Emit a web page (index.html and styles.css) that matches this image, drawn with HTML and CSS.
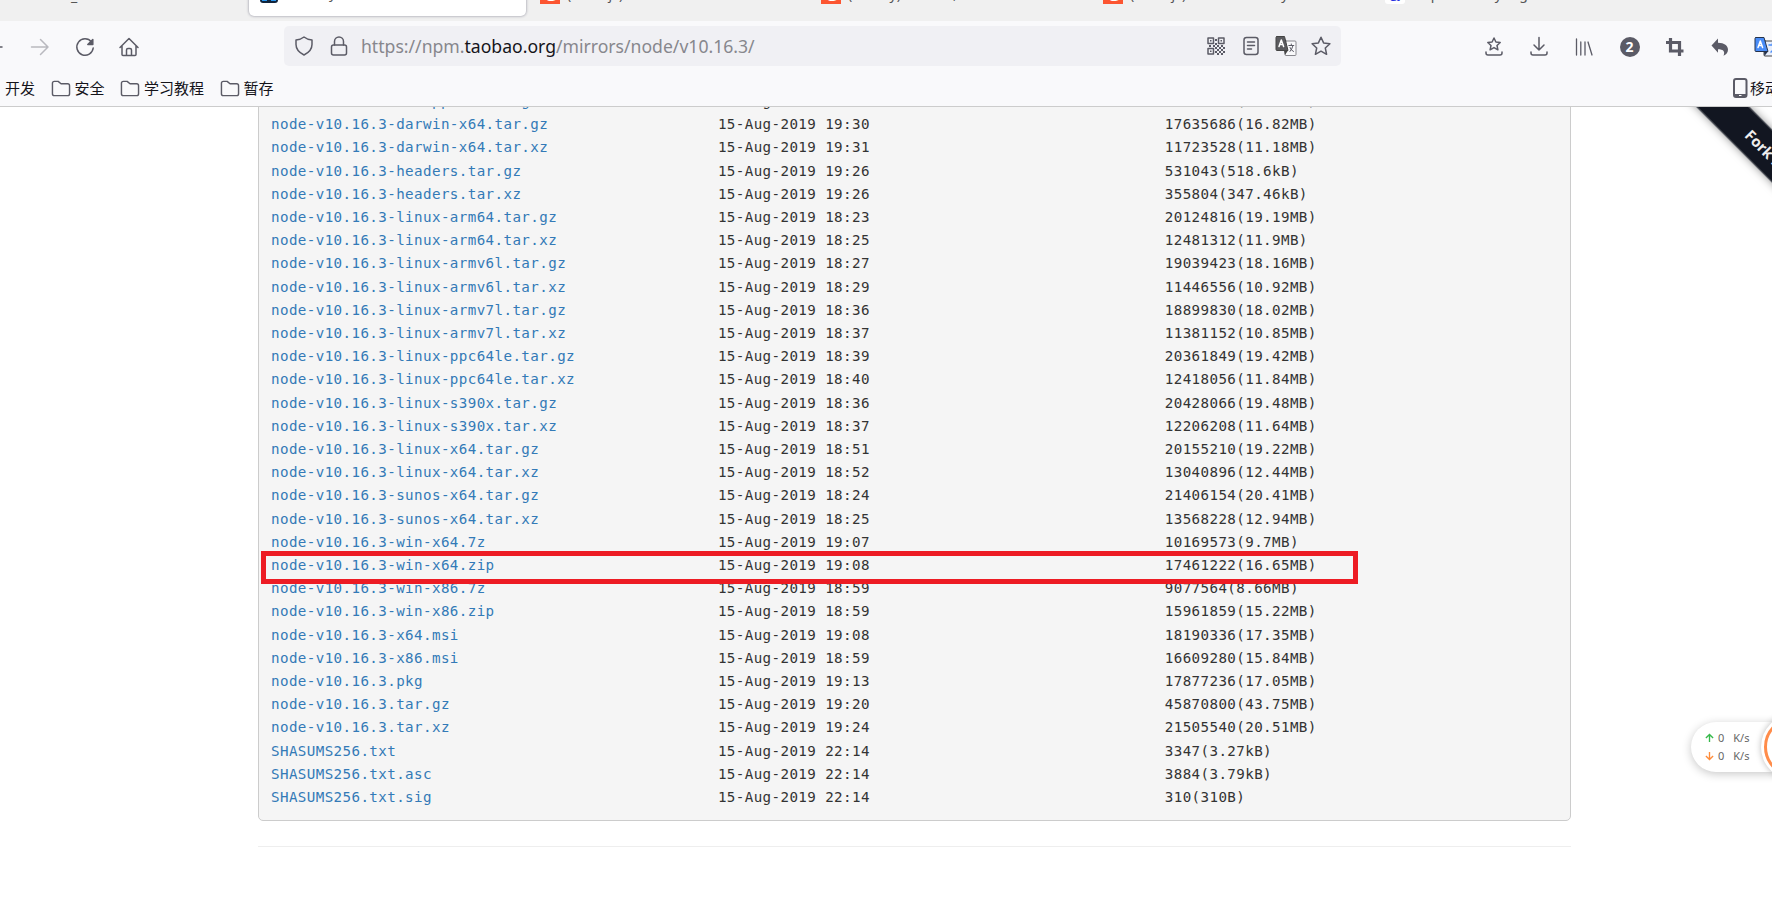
FILE: index.html
```html
<!DOCTYPE html>
<html lang="zh">
<head>
<meta charset="utf-8">
<title>node v10.16.3</title>
<link rel="stylesheet" href="styles.css">
</head>
<body>
<header class="browser">
  <div class="tabs">
    <span class="tab-text underscore">_</span>
    <div class="active-tab"><svg class="npm" viewBox="0 0 18 18"><rect width="18" height="18" rx="3" fill="#10243c"/><path d="M2 11h5v5H2zM11 11h5v5h-5z" fill="#2997f0"/></svg><span class="tab-text">Binary</span></div>
    <div class="tab t1"><i class="csdn">C</i><span class="tab-text">(node.js)</span></div>
    <div class="tab t2"><i class="csdn">C</i><span class="tab-text">(node.y) CSDN x,</span></div>
    <div class="tab t3"><i class="csdn">C</i><span class="tab-text">(node.js) CSDN node my</span></div>
    <div class="tab t4"><i class="baidu">a</i><span class="tab-text">https://binary.org/mirrors/v10.16.3/</span></div>
  </div>
  <nav class="toolbar">
    <svg class="ic back" viewBox="0 0 20 20"><path d="M18 10H2"/></svg>
    <svg class="ic forward" viewBox="0 0 20 20"><path d="M1.500 10h16M10.500 2.500l7.500 7.500-7.500 7.500"/></svg>
    <svg class="ic reload" viewBox="0 0 20 20"><path d="M16.500 5A8.200 8.200 0 1 0 18.200 11"/><path d="M17.800 2.500v5h-5z" class="solid"/></svg>
    <svg class="ic home" viewBox="0 0 20 20"><path d="M1 10.500 10 1.500l9 9M3 9v8.500q0 1 1 1h12q1 0 1-1V9M7.500 18v-5q0-1.500 1.500-1.500h2q1.500 0 1.500 1.500v5"/></svg>
    <div class="address">
      <svg class="ic shield" viewBox="0 0 20 20"><path d="M10 1c2.500 2 5 2.800 8 3v4.500c0 4.500-4 8.500-8 10.500-4-2-8-6-8-10.500V4c3-.2 5.500-1 8-3z"/></svg>
      <svg class="ic lock" viewBox="0 0 20 20"><rect x="2.500" y="9" width="15" height="10" rx="2"/><path d="M5.500 9V5.500a4.500 4.500 0 0 1 9 0V9"/></svg>
      <span class="url">https://npm.<b>taobao.org</b>/mirrors/node/v10.16.3/</span>
      <div class="address-icons">
        <svg class="ic qr" viewBox="0 0 20 20"><path d="M2 2h5.500v5.500H2zM12.500 2H18v5.500h-5.500zM2 12.500h5.500V18H2z"/><path class="dots" d="M4 4h1.500v1.500H4zM14.500 4H16v1.500h-1.500zM4 14.500h1.500V16H4zM9 3h2v2H9zM9 7h2v2H9zM3 9h2v2H3zM7 9h2v2H7zM11 9h2v2h-2zM15 9h2v2h-2zM9 11h2v2H9zM13 11h2v2h-2zM17 11h2v2h-2zM11 13h2v2h-2zM15 13h2v2h-2zM9 15h2v2H9zM13 15h2v2h-2zM17 15h2v2h-2zM11 17h2v2h-2zM15 17h2v2h-2z"/></svg>
        <svg class="ic" viewBox="0 0 20 20"><rect x="3" y="1.500" width="14" height="17" rx="2.500"/><path d="M6.500 6h7M6.500 9.500h7M6.500 13h4"/></svg>
        <svg class="ic translate" viewBox="0 0 20 20"><rect x="9" y="5" width="11" height="14.500" rx="1" fill="#f9f9fb" stroke="#87878d" stroke-width="1"/><path d="M1 .5h7.500l3.500 14H1q-1 0-1-1v-12q0-1 1-1z" fill="#5b5b5f" stroke="#444" stroke-width="1"/><path d="m9 19 3-4.500H8z" fill="#444" stroke="none"/><path d="m3 10.500 2.300-6.500 2.300 6.500M4 8.500h3" stroke="#fff"/><path d="M12.800 9.500h5M15.300 8v1.500M17 9.500q-1 4-3 6M14 11.500q1 3 3.500 4" stroke-width="1"/></svg>
        <svg class="ic" viewBox="0 0 20 20"><path d="m10 1.200 2.600 5.700 6.300.8-4.600 4.300 1.300 6.300-5.600-3.100-5.600 3.100L5.700 12 1.100 7.700l6.300-.8z"/></svg>
      </div>
    </div>
    <div class="actions">
      <svg class="ic" viewBox="0 0 20 20"><path d="m10 1 1.900 4 4.300.5-3.200 3 .9 4.300-3.900-2.200-3.900 2.200.9-4.300-3.200-3 4.300-.5zM2 15v1q0 2 2 2h12q2 0 2-2v-1"/></svg>
      <svg class="ic" viewBox="0 0 20 20"><path d="M10 .5v12.500M5 8l5 5 5-5M2 15v1q0 2 2 2h12q2 0 2-2v-1"/></svg>
      <svg class="ic thin" viewBox="0 0 20 20"><path d="M2.500 2v16M6.800 5v13M11 5v13M14 5l4 13"/></svg>
      <span class="count">2</span>
      <svg class="ic crop" viewBox="0 0 20 20"><path d="M5.500 1v13H18.500M1 5.500h13.500V19"/></svg>
      <svg class="ic" viewBox="0 0 20 20"><path d="M8 1.500v4.300c6.500 0 10 3 10 7 0 3-2 5-4.500 6 2-4.500-.5-6.500-5.500-6.500v3.500L1.500 8.500z" fill="#5b5b66" stroke="none"/></svg>
      <svg class="ic translate" viewBox="0 0 20 20"><rect x="9" y="4" width="14" height="15" rx="1" fill="#e8eefb" stroke="#444" stroke-width="1"/><path d="M1 .5h8l4 14H1q-1 0-1-1v-12q0-1 1-1z" fill="#4a8df8" stroke="#25324a" stroke-width="1"/><path d="m9.500 19 3.500-4.500H9z" fill="#25324a" stroke="none"/><path d="m3 10.500 2.300-6.500 2.300 6.500M4 8.500h3" stroke="#fff"/><path d="M14 8h7M17.500 6v2M20 8q-1 5-4 7" stroke="#4a8df8"/></svg>
    </div>
  </nav>
  <div class="bookmarks">
    <span class="bm">开发</span>
    <span class="bm"><svg class="ic folder" viewBox="0 0 20 20"><path d="M1 15.500v-11q0-2 2-2h4l3 2.500h7q2 0 2 2v8.500q0 2-2 2H3q-2 0-2-2z"/></svg>安全</span>
    <span class="bm"><svg class="ic folder" viewBox="0 0 20 20"><path d="M1 15.500v-11q0-2 2-2h4l3 2.500h7q2 0 2 2v8.500q0 2-2 2H3q-2 0-2-2z"/></svg>学习教程</span>
    <span class="bm"><svg class="ic folder" viewBox="0 0 20 20"><path d="M1 15.500v-11q0-2 2-2h4l3 2.500h7q2 0 2 2v8.500q0 2-2 2H3q-2 0-2-2z"/></svg>暂存</span>
    <span class="mobile"><svg viewBox="0 0 16 20"><rect x="2" y="1" width="12.500" height="18" rx="2" fill="none" stroke="#5b5b66" stroke-width="2"/><path d="M2 16h12v3H2z" fill="#5b5b66"/><path d="M7 17.500h2.500" stroke="#fff"/></svg>移动设备</span>
  </div>
</header>
<main class="page">
  <div class="listing" id="listing"></div>
  <hr>
  <div class="highlight"></div>
  <div class="ribbon"><span>Fork me on GitHub</span></div>
  <div class="speed">
    <div><svg viewBox="0 0 10 10"><path d="M5 9.500V1M1 5l4-4 4 4" stroke="#37b94b"/></svg><span>0</span><span class="unit">K/s</span></div>
    <div><svg viewBox="0 0 10 10"><path d="M5 .5V9M1 5l4 4 4-4" stroke="#ff8c3a"/></svg><span>0</span><span class="unit">K/s</span></div>
    <i class="ring"></i>
  </div>
</main>
<script src="listing.js"></script>
</body>
</html>
```
FILE: styles.css
```css
* { box-sizing: border-box; }
body { margin: 0; width: 1772px; height: 912px; overflow: hidden; background: #fff; display: flex; flex-direction: column; font-family: "Noto Sans", "Noto Sans CJK SC", sans-serif; }
.browser { flex: none; height: 107px; background: #f9f9fb; border-bottom: 1px solid #ccc; z-index: 5; }
.tabs { position: relative; height: 21px; overflow: hidden; background: #f0f0f0; }
.tab-text { font-size: 14px; line-height: 20px; color: #555; white-space: nowrap; }
.underscore { position: absolute; left: 71px; top: -14px; }
.active-tab { position: absolute; left: 249px; top: -20px; width: 277px; height: 36px; border-radius: 5px; background: #fff; box-shadow: 0 0 3px #8a8a98; padding: 4px 11px; display: flex; gap: 16px; }
.active-tab .tab-text { margin-top: -1px; }
.npm { width: 18px; height: 18px; margin-top: 1px; }
.tab { position: absolute; top: -15px; display: flex; gap: 7px; }
.tab .tab-text { margin-top: -1px; }
.t1 { left: 540px; } .t2 { left: 821px; } .t3 { left: 1103px; } .t4 { left: 1385px; }
.csdn, .baidu { width: 20px; height: 19px; background: #fc5531; color: #fff; font: bold 20px/17px "Noto Sans", sans-serif; text-align: center; }
.baidu { background: #fff; color: #2932e1; border-radius: 3px; }
.toolbar { height: 51px; display: flex; align-items: center; }
.ic { width: 20px; height: 20px; flex: none; fill: none; stroke: #5b5b66; stroke-width: 1.5; stroke-linecap: round; stroke-linejoin: round; overflow: visible; }
.solid { fill: #5b5b66; }
.thin { stroke-width: 1.3; }
.dots { fill: #5b5b66; stroke: none; }
.back { margin-left: -16px; }
.forward { margin-left: 26px; stroke: #b9b9bf; }
.reload { margin-left: 25px; }
.home { margin-left: 24px; }
.address { flex: none; width: 1057px; height: 40px; margin: -1px 0 0 145px; padding: 0 10px; border-radius: 5px; background: #f0f0f4; display: flex; align-items: center; }
.lock { margin-left: 15px; }
.url { margin-left: 12px; font-size: 17.600px; color: #87878d; white-space: nowrap; }
.url b { font-weight: 400; color: #15141a; }
.address-icons { margin-left: auto; display: flex; gap: 15px; }
.actions { margin-left: 143px; display: flex; gap: 25.200px; align-items: center; }
.count { width: 20px; height: 20px; border-radius: 50%; background: #5b5b66; color: #fff; font: bold 14px/20px "Noto Sans", sans-serif; text-align: center; }
.crop { stroke-width: 3.2; stroke-linecap: butt; stroke-linejoin: miter; }
.bookmarks { height: 34px; display: flex; gap: 15.500px; padding: 0 0 2px 5px; align-items: center; font: 15px/20px "Noto Sans CJK SC", sans-serif; color: #15141a; white-space: nowrap; }
.bm { display: flex; align-items: center; gap: 4px; }
.folder { width: 20px; height: 19px; }
.mobile { display: flex; align-items: center; gap: 2px; margin-left: 1443px; }
.mobile svg { width: 16px; height: 20px; }
.page { position: relative; flex: 1; overflow: hidden; padding-left: 258px; }
.listing { width: 1313px; height: 732px; margin-top: -18px; padding: 0 12px; background: #f5f5f5; border: 1px solid #ccc; border-radius: 5px; color: #333; font: 14.200px/23.214px "DejaVu Sans Mono", monospace; letter-spacing: .4px; }
.row { display: grid; grid-template-columns: 446.875px 446.875px 1fr; height: 23.214px; white-space: pre; }
.row a { color: #337ab7; }
hr { width: 1313px; height: 1px; margin: 25px 0 0; border: 0; background: #eee; }
.highlight { position: absolute; left: 261px; top: 444px; width: 1097px; height: 33px; border: 5px solid #ed1c24; }
.ribbon { position: absolute; left: 1640px; top: 29px; width: 260px; height: 36px; background: #121621; transform: rotate(45deg); box-shadow: 0 0 10px rgba(0,0,0,.5); outline: 1px solid #454952; color: #eee; font: bold 15px/36px "Open Sans", sans-serif; }
.ribbon span { padding-left: 99px; }
.speed { position: absolute; left: 1691px; top: 615px; width: 130px; height: 50px; border-radius: 25px; background: #fff; box-shadow: 0 2px 10px rgba(0,0,0,.22); padding: 7px 0 0 14px; color: #666; font: 11px/18px "Noto Sans", sans-serif; }
.speed div { display: flex; align-items: center; }
.speed svg { width: 9px; height: 10px; margin-right: 4px; fill: none; stroke-width: 1.5; }
.unit { margin-left: 9px; }
.ring { position: absolute; left: 73px; top: -5px; width: 60px; height: 60px; border: 3px solid #ff8c4a; border-radius: 50%; background: #fff; box-shadow: 0 0 0 3px #fff, 0 0 6px 3px #bbb; }
```
FILE: listing.js
```js
const files = `-aix-ppc64.tar.gz|19:00|25136012(23.97MB)
-darwin-x64.tar.gz|19:30|17635686(16.82MB)
-darwin-x64.tar.xz|19:31|11723528(11.18MB)
-headers.tar.gz|19:26|531043(518.6kB)
-headers.tar.xz|19:26|355804(347.46kB)
-linux-arm64.tar.gz|18:23|20124816(19.19MB)
-linux-arm64.tar.xz|18:25|12481312(11.9MB)
-linux-armv6l.tar.gz|18:27|19039423(18.16MB)
-linux-armv6l.tar.xz|18:29|11446556(10.92MB)
-linux-armv7l.tar.gz|18:36|18899830(18.02MB)
-linux-armv7l.tar.xz|18:37|11381152(10.85MB)
-linux-ppc64le.tar.gz|18:39|20361849(19.42MB)
-linux-ppc64le.tar.xz|18:40|12418056(11.84MB)
-linux-s390x.tar.gz|18:36|20428066(19.48MB)
-linux-s390x.tar.xz|18:37|12206208(11.64MB)
-linux-x64.tar.gz|18:51|20155210(19.22MB)
-linux-x64.tar.xz|18:52|13040896(12.44MB)
-sunos-x64.tar.gz|18:24|21406154(20.41MB)
-sunos-x64.tar.xz|18:25|13568228(12.94MB)
-win-x64.7z|19:07|10169573(9.7MB)
-win-x64.zip|19:08|17461222(16.65MB)
-win-x86.7z|18:59|9077564(8.66MB)
-win-x86.zip|18:59|15961859(15.22MB)
-x64.msi|19:08|18190336(17.35MB)
-x86.msi|18:59|16609280(15.84MB)
.pkg|19:13|17877236(17.05MB)
.tar.gz|19:20|45870800(43.75MB)
.tar.xz|19:24|21505540(20.51MB)
SHASUMS256.txt|22:14|3347(3.27kB)
SHASUMS256.txt.asc|22:14|3884(3.79kB)
SHASUMS256.txt.sig|22:14|310(310B)`.split('\n');
document.getElementById('listing').innerHTML = files.map(line => {
  const [name, time, size] = line.split('|');
  const full = name.startsWith('SHA') ? name : 'node-v10.16.3' + name;
  return `<div class="row"><a>${full}</a><span>15-Aug-2019 ${time}</span><span>${size}</span></div>`;
}).join('');
```
